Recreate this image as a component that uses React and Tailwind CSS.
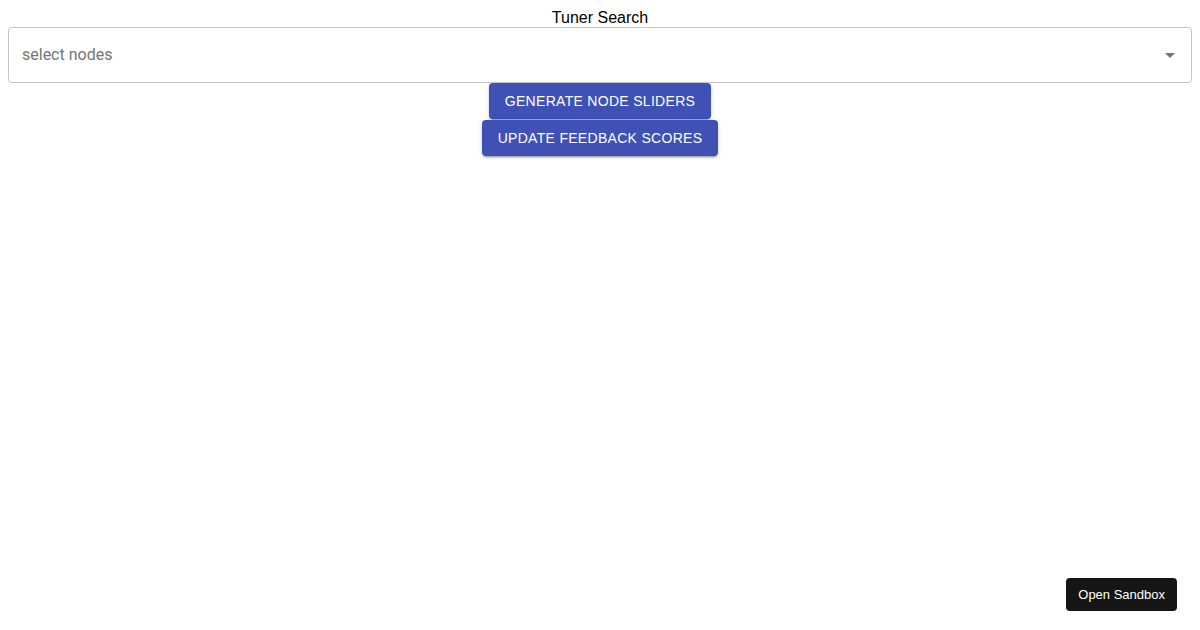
export default function App() {
  return (
    <div className="relative w-[1200px] h-[630px] bg-white overflow-hidden font-['Liberation_Sans',Arial,sans-serif]">
      <div className="px-2 pt-2 flex flex-col items-center">
        <div className="text-[16px] leading-[19px] text-black">Tuner Search</div>
        <div className="relative w-full h-[56px] rounded-[4px] border border-[#c4c4c4] flex items-center pl-[13px] font-['Roboto',sans-serif]">
          <span className="text-[16px] text-[#757575]">select nodes</span>
          <svg className="absolute right-[9px] top-[15px] w-6 h-6" viewBox="0 0 24 24" fill="#757575">
            <path d="M7 10l5 5 5-5z" />
          </svg>
        </div>
        <button className="h-9 px-4 rounded-[4px] bg-[#3f51b5] text-white text-[14px] font-normal tracking-[0.3px] uppercase shadow-[0_3px_1px_-2px_rgba(0,0,0,0.2),0_2px_2px_0_rgba(0,0,0,0.14),0_1px_5px_0_rgba(0,0,0,0.12)]">
          Generate Node Sliders
        </button>
        <button className="mt-px h-9 px-4 rounded-[4px] bg-[#3f51b5] text-white text-[14px] font-normal tracking-[0.3px] uppercase shadow-[0_3px_1px_-2px_rgba(0,0,0,0.2),0_2px_2px_0_rgba(0,0,0,0.14),0_1px_5px_0_rgba(0,0,0,0.12)]">
          Update Feedback Scores
        </button>
      </div>
      <div className="absolute right-[23px] bottom-[19px] h-[33px] px-[12px] rounded-[4px] bg-[#151515] text-white text-[13px] flex items-center">
        Open Sandbox
      </div>
    </div>
  );
}
